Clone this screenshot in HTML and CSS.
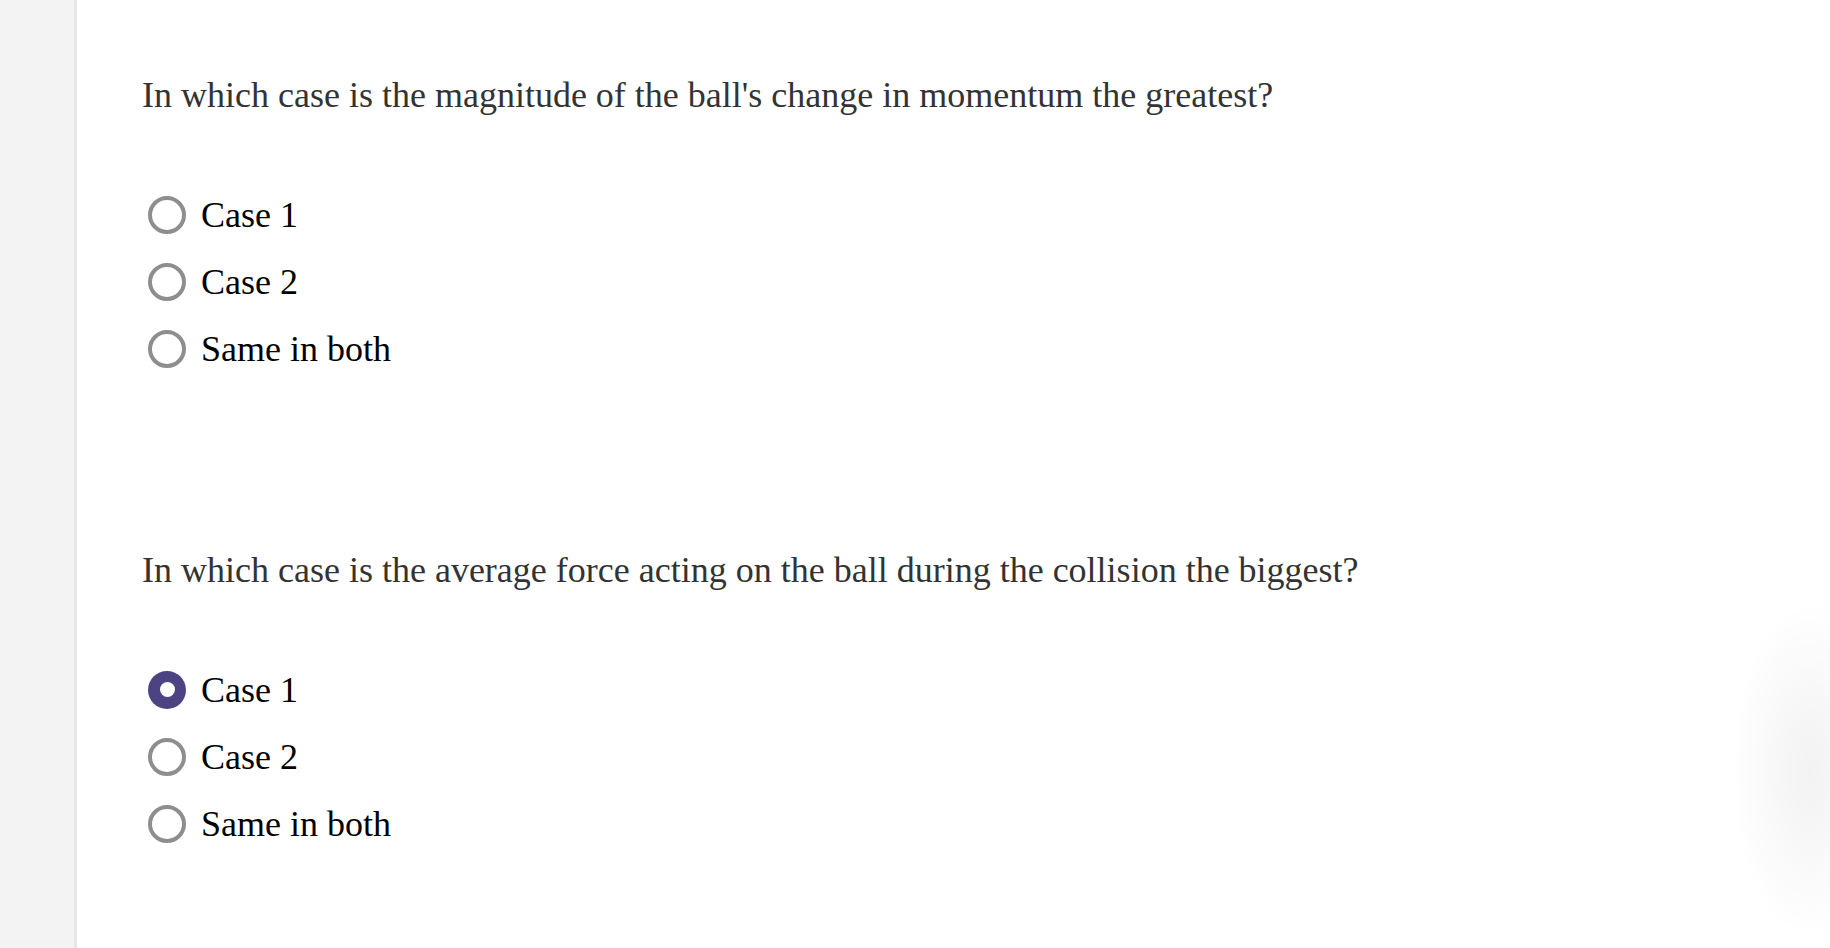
FILE: index.html
```html
<!DOCTYPE html>
<html lang="en">
<head>
<meta charset="utf-8">
<title>Quiz</title>
<link rel="stylesheet" href="styles.css">
</head>
<body>
<div class="page">
  <aside class="sidebar"></aside>
  <main class="content">
    <section class="question">
      <p class="prompt">In which case is the magnitude of the ball's change in momentum the greatest?</p>
      <ul class="options">
        <li class="option"><span class="radio"></span><span class="label">Case 1</span></li>
        <li class="option"><span class="radio"></span><span class="label">Case 2</span></li>
        <li class="option"><span class="radio"></span><span class="label">Same in both</span></li>
      </ul>
    </section>
    <section class="question">
      <p class="prompt">In which case is the average force acting on the ball during the collision the biggest?</p>
      <ul class="options">
        <li class="option"><span class="radio checked"></span><span class="label">Case 1</span></li>
        <li class="option"><span class="radio"></span><span class="label">Case 2</span></li>
        <li class="option"><span class="radio"></span><span class="label">Same in both</span></li>
      </ul>
    </section>
  </main>
  <div class="edge-shadow"></div>
</div>
</body>
</html>
```

FILE: styles.css
```css
html, body {
  margin: 0;
  padding: 0;
  background: #ffffff;
}

.page {
  position: relative;
  display: flex;
  width: 1830px;
  height: 948px;
  overflow: hidden;
  font-family: "Liberation Serif", "Times New Roman", serif;
}

.sidebar {
  width: 74px;
  flex: 0 0 74px;
  background: #f3f3f3;
  border-right: 3px solid #e6e6e6;
}

.content {
  flex: 1;
  padding: 75px 0 0 65px;
}

.question + .question {
  margin-top: 168px;
}

.prompt {
  margin: 0;
  font-size: 36px;
  line-height: 40px;
  color: #333333;
  white-space: nowrap;
}

.options {
  list-style: none;
  margin: 66px 0 0 0;
  padding: 0;
}

.option {
  display: flex;
  align-items: center;
  height: 67px;
}

.radio {
  box-sizing: border-box;
  width: 38px;
  height: 38px;
  margin-left: 6px;
  margin-right: 15px;
  border: 4px solid #8e8e8e;
  border-radius: 50%;
  background: #ffffff;
  display: flex;
  align-items: center;
  justify-content: center;
}

.radio.checked {
  border: none;
  background: #4c4482;
}

.radio.checked::after {
  content: "";
  width: 15px;
  height: 15px;
  border-radius: 50%;
  background: #ffffff;
}

.label {
  font-size: 36px;
  line-height: 40px;
  color: #000000;
}

.edge-shadow {
  position: absolute;
  right: -60px;
  top: 600px;
  width: 160px;
  height: 340px;
  background: radial-gradient(ellipse at center, rgba(0,0,0,0.05) 0%, rgba(0,0,0,0.025) 40%, rgba(0,0,0,0) 70%);
  pointer-events: none;
}
```
